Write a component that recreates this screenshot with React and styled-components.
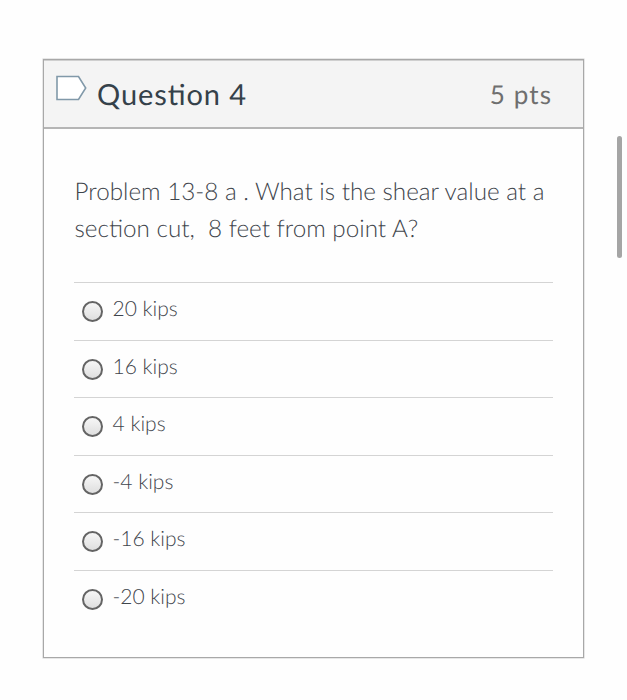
import React from "react";
import styled, { createGlobalStyle } from "styled-components";

const GlobalStyle = createGlobalStyle`
  * {
    box-sizing: border-box;
  }
  body {
    margin: 0;
    background: #fefefe;
    font-family: Lato, "Liberation Sans", sans-serif;
    font-feature-settings: "liga" 1;
    text-rendering: geometricPrecision;
  }
`;

const Page = styled.div`
  display: flex;
  align-items: flex-start;
  justify-content: space-between;
  width: 627px;
  height: 700px;
  padding: 59px 5px 0 43px;
  overflow: hidden;
`;

const Card = styled.section`
  width: 541px;
  height: 599px;
  border: 1px solid #a8a8a8;
  box-shadow: 0 0 0 0.5px #d0d0d0;
  background: #fefefe;
`;

const Header = styled.header`
  display: flex;
  align-items: flex-start;
  height: 69px;
  padding: 0 31px 0 12px;
  border-bottom: 2px solid #b5b5b5;
  background: #f4f4f4;
  box-shadow: inset 0 1px #cfcfcf;
`;

const Flag = styled.svg`
  flex: none;
  width: 32px;
  height: 26px;
  margin-top: 15px;
`;

const Title = styled.h1`
  flex: 1;
  margin: 17px 0 0 9px;
  color: #35414a;
  font-size: 29px;
  font-weight: 400;
  line-height: 36px;
  letter-spacing: 0.9px;
`;

const Points = styled.span`
  margin-top: 16px;
  color: #6f6f6f;
  font-size: 26px;
  line-height: 36px;
  letter-spacing: 1.1px;
`;

const Body = styled.div`
  padding: 45px 30px 0;
`;

const Prompt = styled.p`
  margin: 0 0 0 0.5px;
  color: #3f454c;
  font-size: 24.25px;
  font-weight: 300;
  line-height: 36.5px;
  white-space: pre;
`;

const Answers = styled.div`
  margin-top: 35px;
`;

const Answer = styled.label`
  display: flex;
  align-items: flex-start;
  height: 57.5px;
  padding: 0 0 0 8px;
  border-top: 1px solid #d4d4d4;
  color: #3f454c;
  font-size: 21px;
  font-weight: 300;
  line-height: 30px;
`;

const Radio = styled.input`
  appearance: none;
  flex: none;
  width: 21px;
  height: 21px;
  margin: 18px 9.5px 0 0;
  border: 2px solid #646464;
  border-radius: 50%;
  background: linear-gradient(#f9f9f9, #dcdcdc) border-box;
`;

const AnswerText = styled.span`
  margin-top: 11px;
`;

const Scrollbar = styled.div`
  width: 5px;
  height: 122px;
  margin-top: 77px;
  border-radius: 3px;
  background: #a5a5a5;
`;

const answers = ["20 kips", "16 kips", "4 kips", "-4 kips", "-16 kips", "-20 kips"];

function App() {
  return (
    <>
      <GlobalStyle />
      <Page>
        <Card>
          <Header>
            <Flag viewBox="0 0 32 26">
              <path
                d="M1 1.5H22.5L29.7 13L22.5 24.5H1Z"
                fill="#fff"
                stroke="#8199a9"
                strokeWidth="1.6"
              />
            </Flag>
            <Title>Question 4</Title>
            <Points>5 pts</Points>
          </Header>
          <Body>
            <Prompt>
              {"Problem 13-8 a . What is the shear value at a\nsection cut,  8 feet from point A?"}
            </Prompt>
            <Answers>
              {answers.map((text) => (
                <Answer key={text}>
                  <Radio type="radio" name="answer" />
                  <AnswerText>{text}</AnswerText>
                </Answer>
              ))}
            </Answers>
          </Body>
        </Card>
        <Scrollbar />
      </Page>
    </>
  );
}

export default App;
